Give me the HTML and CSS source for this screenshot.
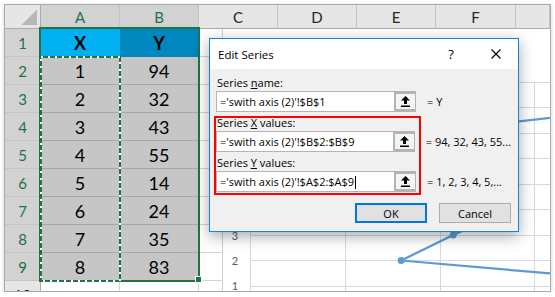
FILE: index.html
```html
<!DOCTYPE html>
<html lang="en">

<head>
  <meta charset="UTF-8">
  <meta name="viewport" content="width=device-width, initial-scale=1.0">
  <title>Edit Series</title>
  <link rel="stylesheet" href="styles.css">
</head>

<body>
  <div class="window">
    <div class="sheet">
      <div class="corner"></div>
      <div class="col-head is-sel">A</div>
      <div class="col-head is-sel">B</div>
      <div class="col-head">C</div>
      <div class="col-head">D</div>
      <div class="col-head">E</div>
      <div class="col-head">F</div>
      <div class="col-head"></div>

      <div class="row-head is-sel">1</div>
      <div class="cell title-x">X</div>
      <div class="cell title-y">Y</div>
      <div class="cell"></div>
      <div class="cell rest"></div>

      <div class="row-head is-sel">2</div>
      <div class="cell is-sel">1</div>
      <div class="cell is-sel">94</div>
      <div class="cell"></div>
      <div class="cell rest"></div>

      <div class="row-head is-sel">3</div>
      <div class="cell is-sel">2</div>
      <div class="cell is-sel">32</div>
      <div class="cell"></div>
      <div class="cell rest"></div>

      <div class="row-head is-sel">4</div>
      <div class="cell is-sel">3</div>
      <div class="cell is-sel">43</div>
      <div class="cell"></div>
      <div class="cell rest"></div>

      <div class="row-head is-sel">5</div>
      <div class="cell is-sel">4</div>
      <div class="cell is-sel">55</div>
      <div class="cell"></div>
      <div class="cell rest"></div>

      <div class="row-head is-sel">6</div>
      <div class="cell is-sel">5</div>
      <div class="cell is-sel">14</div>
      <div class="cell"></div>
      <div class="cell rest"></div>

      <div class="row-head is-sel">7</div>
      <div class="cell is-sel">6</div>
      <div class="cell is-sel">24</div>
      <div class="cell"></div>
      <div class="cell rest"></div>

      <div class="row-head is-sel">8</div>
      <div class="cell is-sel">7</div>
      <div class="cell is-sel">35</div>
      <div class="cell"></div>
      <div class="cell rest"></div>

      <div class="row-head is-sel">9</div>
      <div class="cell is-sel">8</div>
      <div class="cell is-sel">83</div>
      <div class="cell"></div>
      <div class="cell rest"></div>

      <div class="row-head">10</div>
      <div class="cell"></div>
      <div class="cell"></div>
      <div class="cell"></div>
      <div class="cell rest"></div>
    </div>

    <!-- embedded chart, sits over the cells -->
    <svg class="chart" viewBox="222 29 328 262" width="328" height="262">
      <rect x="222" y="29" width="328" height="262" fill="#fff" />
      <line x1="222.5" y1="29" x2="222.5" y2="291" stroke="#d0d0d0" />
      <g stroke="#d9d9d9">
        <line x1="250" y1="82.5" x2="550" y2="82.5" />
        <line x1="250" y1="107.5" x2="550" y2="107.5" />
        <line x1="250" y1="133.5" x2="550" y2="133.5" />
        <line x1="250" y1="158.5" x2="550" y2="158.5" />
        <line x1="250" y1="184.5" x2="550" y2="184.5" />
        <line x1="250" y1="209.5" x2="550" y2="209.5" />
        <line x1="250" y1="235.5" x2="550" y2="235.5" />
        <line x1="250" y1="260.5" x2="550" y2="260.5" />
        <line x1="250" y1="286.5" x2="550" y2="286.5" />
        <line x1="250.5" y1="82" x2="250.5" y2="291" />
        <line x1="345.5" y1="82" x2="345.5" y2="291" />
        <line x1="440.5" y1="82" x2="440.5" y2="291" />
        <line x1="534.5" y1="82" x2="534.5" y2="291" />
      </g>
      <g class="axis-lbl" text-anchor="middle" dominant-baseline="central">
        <text x="235" y="235">3</text>
        <text x="235" y="260">2</text>
        <text x="235" y="285">1</text>
      </g>
      <polyline points="694.2,286 401.2,260.5 453.2,235 509.9,209.5 316.2,184 363.4,158.5 415.4,133 642.2,107.5"
        fill="none" stroke="#5b9bd5" stroke-width="2.25" stroke-linejoin="round" />
      <g fill="#5b9bd5">
        <circle cx="401.2" cy="260.5" r="3.5" />
        <circle cx="453.2" cy="235" r="3.5" />
        <circle cx="509.9" cy="209.5" r="3.5" />
        <circle cx="316.2" cy="184" r="3.5" />
        <circle cx="363.4" cy="158.5" r="3.5" />
        <circle cx="415.4" cy="133" r="3.5" />
      </g>
    </svg>

    <div class="selection"></div>
    <div class="handle"></div>
    <svg class="ants" width="81" height="226">
      <rect x="1" y="1" width="79" height="224" fill="none" stroke="#217346" stroke-width="2" />
      <rect x="1" y="1" width="79" height="224" fill="none" stroke="#fff" stroke-width="2" stroke-dasharray="2 5" />
    </svg>

    <div class="dialog">
      <div class="dlg-title">
        <span class="dlg-name">Edit Series</span>
        <span class="dlg-help">?</span>
        <span class="dlg-close">
          <svg width="10" height="10" viewBox="0 0 10 10">
            <path d="M0.5 0.5 L9.5 9.5 M9.5 0.5 L0.5 9.5" stroke="#000" stroke-width="1.1" />
          </svg>
        </span>
      </div>
      <div class="dlg-body">
        <div class="lbl">Series <u>n</u>ame:</div>
        <div class="row">
          <div class="field">
            <span class="ref">='swith axis (2)'!$B$1</span>
            <span class="pick">
              <svg width="9" height="11" viewBox="0 0 9 11">
                <path d="M4.5 0 L0 4.5 L3 4.5 L3 8 L6 8 L6 4.5 L9 4.5 Z" fill="#000" />
                <rect x="0" y="9.5" width="9" height="1.5" fill="#000" />
              </svg>
            </span>
          </div>
          <span class="val">= Y</span>
        </div>

        <div class="lbl">Series <u>X</u> values:</div>
        <div class="row">
          <div class="field">
            <span class="ref">='swith axis (2)'!$B$2:$B$9</span>
            <span class="pick">
              <svg width="9" height="11" viewBox="0 0 9 11">
                <path d="M4.5 0 L0 4.5 L3 4.5 L3 8 L6 8 L6 4.5 L9 4.5 Z" fill="#000" />
                <rect x="0" y="9.5" width="9" height="1.5" fill="#000" />
              </svg>
            </span>
          </div>
          <span class="val">= 94, 32, 43, 55...</span>
        </div>

        <div class="lbl">Series <u>Y</u> values:</div>
        <div class="row">
          <div class="field">
            <span class="ref">='swith axis (2)'!$A$2:$A$9<i class="caret"></i></span>
            <span class="pick">
              <svg width="9" height="11" viewBox="0 0 9 11">
                <path d="M4.5 0 L0 4.5 L3 4.5 L3 8 L6 8 L6 4.5 L9 4.5 Z" fill="#000" />
                <rect x="0" y="9.5" width="9" height="1.5" fill="#000" />
              </svg>
            </span>
          </div>
          <span class="val">= 1, 2, 3, 4, 5,...</span>
        </div>

        <div class="buttons">
          <span class="btn is-default">OK</span>
          <span class="btn">Cancel</span>
        </div>
      </div>
      <!-- red highlight drawn over the x / y fields -->
      <div class="mark"></div>
    </div>
  </div>
</body>

</html>
```

FILE: styles.css
```css
* {
  box-sizing: border-box;
}

body {
  margin: 0;
  background-color: #fff;
  font-family: Lato, "Liberation Sans", sans-serif;
}

.window {
  position: relative;
  margin: 4px 0 0 4px;
  width: 547px;
  height: 288px;
  border: 1px solid #a9a9a9;
  overflow: hidden;
  box-shadow: 0 1px 4px rgba(0, 0, 0, .18);
}

.sheet {
  display: grid;
  grid-template-columns: 36px repeat(5, 79px) 80px 1fr;
  grid-template-rows: 24px repeat(10, 28px);
}

.corner,
.col-head,
.row-head {
  display: flex;
  justify-content: center;
  align-items: center;
  background-color: #e6e6e6;
  font-size: 15px;
  color: #262626;
}

.corner {
  border-right: 1px solid #ababab;
  border-bottom: 1px solid #ababab;
  background-image: linear-gradient(to bottom right, transparent 50%, #b7b7b7 50%);
  background-size: 15px 15px;
  background-position: right 3px bottom 3px;
  background-repeat: no-repeat;
}

.col-head {
  border-right: 1px solid #c4c4c4;
  border-bottom: 1px solid #ababab;
}

.row-head {
  border-right: 1px solid #ababab;
  border-bottom: 1px solid #c4c4c4;
}

.col-head.is-sel,
.row-head.is-sel {
  background-color: #d2d2d2;
  color: #217346;
}

.cell {
  display: flex;
  justify-content: center;
  align-items: center;
  padding-top: 1px;
  border-right: 1px solid #d4d4d4;
  border-bottom: 1px solid #d4d4d4;
  background-color: #fff;
  font-size: 18px;
  color: #000;
}

.cell.is-sel {
  background-color: #c6c6c6;
  border-color: #a8a8a8;
}

.title-x,
.title-y {
  font-weight: bold;
}

.title-x {
  background-color: #00b0f0;
  border-color: #00b0f0;
}

.title-y {
  background-color: #0087bd;
  border-color: #0087bd;
}

.rest {
  grid-column: span 4;
}

/* chart object */
.chart {
  position: absolute;
  left: 217px;
  top: 24px;
  display: block;
}

.axis-lbl {
  font-family: Lato, sans-serif;
  font-size: 11px;
  fill: #595959;
}

/* selection */
.selection {
  position: absolute;
  left: 34px;
  top: 22px;
  width: 161px;
  height: 255px;
  border: 2px solid #217346;
}

.handle {
  position: absolute;
  left: 190px;
  top: 271px;
  width: 7px;
  height: 7px;
  border: 1px solid #fff;
  background-color: #217346;
}

.ants {
  position: absolute;
  left: 35px;
  top: 51px;
  display: block;
}

/* dialog */
.dialog {
  position: absolute;
  left: 204px;
  top: 33px;
  width: 310px;
  height: 194px;
  border: 1px solid #1883d7;
  background-color: #f0f0f0;
  box-shadow: 0 4px 14px rgba(0, 0, 0, .35);
  font-family: "Open Sans", "Noto Sans", sans-serif;
  font-size: 11px;
  color: #000;
}

.dlg-title {
  display: flex;
  align-items: center;
  height: 30px;
  padding: 0 7px 0 8px;
  background-color: #fff;
  font-size: 11.5px;
}

.dlg-name {
  flex: 1;
}

.dlg-help {
  width: 20px;
  margin-right: 20px;
  text-align: center;
  font-size: 13px;
}

.dlg-close {
  display: flex;
  justify-content: center;
  width: 30px;
}

.dlg-body {
  padding: 7px 7px 0 6px;
}

.lbl {
  margin: 4px 0 0 1px;
  line-height: 14px;
}

.lbl:first-child {
  margin-top: 0;
}

.row {
  display: flex;
  align-items: center;
  margin-top: 1px;
}

.field {
  display: flex;
  width: 200px;
  height: 21px;
  border: 1px solid #b4b4b4;
  background-color: #fff;
}

.ref {
  flex: 1;
  padding-left: 3px;
  line-height: 19px;
  white-space: nowrap;
}

.caret {
  display: inline-block;
  width: 1px;
  height: 13px;
  margin-left: 1px;
  background-color: #000;
  vertical-align: -3px;
}

.pick {
  display: flex;
  justify-content: center;
  align-items: center;
  width: 21px;
  border: 2px solid #b4b4b4;
  border-right: 0;
  background-color: #f4f4f4;
}

.val {
  margin-left: 11px;
  white-space: nowrap;
}

.buttons {
  display: flex;
  justify-content: flex-end;
  gap: 12px;
  margin-top: 11px;
}

.btn {
  display: flex;
  justify-content: center;
  align-items: center;
  width: 72px;
  height: 20px;
  border: 1px solid #adadad;
  background-color: #e1e1e1;
}

.btn.is-default {
  border: 2px solid #0078d7;
}

.mark {
  position: absolute;
  left: 4px;
  top: 77px;
  width: 207px;
  height: 79px;
  border: 2px solid #f00;
}
```
